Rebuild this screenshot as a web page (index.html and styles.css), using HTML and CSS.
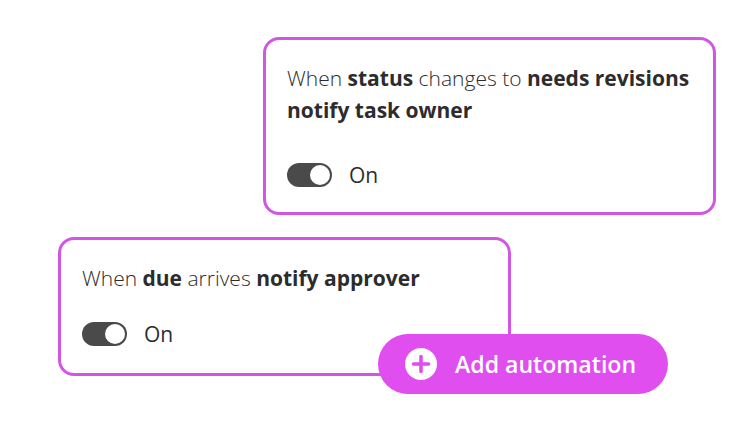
FILE: index.html
```html
<!DOCTYPE html>
<html>
<head>
<meta charset="utf-8">
<link rel="stylesheet" href="styles.css">
</head>
<body>
<div class="stage">
  <div class="card card-top">
    <p class="rule">When <b>status</b> changes to <b>needs revisions notify task owner</b></p>
    <div class="state"><span class="toggle"><span class="knob"></span></span><span class="label">On</span></div>
  </div>
  <div class="card card-bottom">
    <p class="rule">When <b>due</b> arrives <b>notify approver</b></p>
    <div class="state"><span class="toggle"><span class="knob"></span></span><span class="label">On</span></div>
    <button class="add">
      <svg class="plus" width="32" height="32" viewBox="0 0 32 32"><circle cx="16" cy="16" r="16" fill="#fff"/><path d="M16 8.5v15M8.5 16h15" stroke="#e04ef0" stroke-width="3.6" stroke-linecap="round"/></svg>
      <span>Add automation</span>
    </button>
  </div>
</div>
</body>
</html>
```

FILE: styles.css
```css
html, body {
  margin: 0;
  padding: 0;
  background: #fff;
}
body {
  font-family: "Open Sans", "Noto Sans", sans-serif;
  color: #2c2c2c;
}
.stage {
  width: 756px;
  height: 426px;
  padding-top: 37px;
  box-sizing: border-box;
  display: flex;
  flex-direction: column;
  gap: 22px;
}
.card {
  box-sizing: border-box;
  width: 453px;
  border: 3px solid #d156e3;
  border-radius: 16px;
  background: #fff;
  padding: 22px 20px 0 21px;
  position: relative;
}
.card-top {
  margin-left: 263px;
  height: 178px;
}
.card-bottom {
  margin-left: 58px;
  height: 139px;
}
.rule {
  margin: 0;
  font-size: 21px;
  line-height: 32px;
  font-weight: 300;
}
.rule b {
  font-weight: 700;
}
.state {
  display: flex;
  align-items: center;
  gap: 17px;
}
.card-top .state { margin-top: 35px; }
.card-bottom .state { margin-top: 26px; }
.toggle {
  width: 45px;
  height: 24px;
  border-radius: 12px;
  background: #4a4a4a;
  display: flex;
  justify-content: flex-end;
  align-items: center;
  padding: 0 2px;
  box-sizing: border-box;
}
.knob {
  width: 20px;
  height: 20px;
  border-radius: 50%;
  background: #fff;
}
.label {
  font-size: 21px;
  font-weight: 400;
  color: #2c2c2c;
}
.add {
  position: absolute;
  left: 317px;
  top: 94px;
  width: 290px;
  height: 60px;
  border: none;
  border-radius: 30px;
  background: #e04ef0;
  color: #fff;
  display: flex;
  align-items: center;
  padding: 0 0 0 27px;
  gap: 18px;
  font-family: "Open Sans", "Noto Sans", sans-serif;
  font-size: 23.1px;
  font-weight: 600;
  box-sizing: border-box;
}
.plus { flex: none; }
```
